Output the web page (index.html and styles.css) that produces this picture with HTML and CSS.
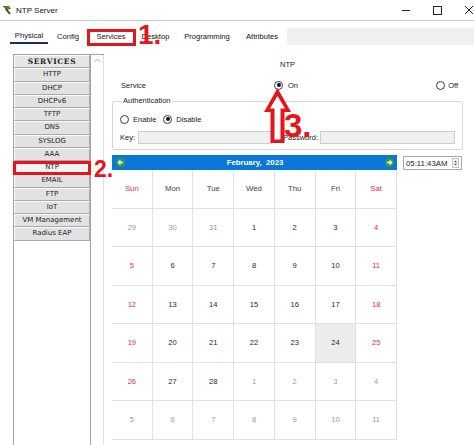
FILE: index.html
```html
<!DOCTYPE html>
<html>
<head>
<meta charset="utf-8">
<title>NTP Server</title>
<link rel="stylesheet" href="styles.css">
</head>
<body>
<div class="window">
  <div class="titlebar">
    <svg class="appicon" viewBox="0 0 10 10" width="10" height="10">
      <path d="M1 1 L7 1 L9 4 L4 5 Z" fill="#3f8a2c"/>
      <path d="M4 4 L8 9" stroke="#5a3a1a" stroke-width="2"/>
      <path d="M1 1 L3 3" stroke="#8a6a3a" stroke-width="1"/>
    </svg>
    <span class="title">NTP Server</span>
    <div class="controls">
      <svg class="ctl-min" width="8" height="8" viewBox="0 0 8 8"><path d="M0 4.5 H8" stroke="#222" stroke-width="1"/></svg>
      <svg class="ctl-max" width="9" height="9" viewBox="0 0 9 9"><rect x="0.5" y="0.5" width="8" height="8" fill="none" stroke="#222" stroke-width="1"/></svg>
      <svg class="ctl-close" width="8" height="8" viewBox="0 0 8 8"><path d="M0 0 L8 8 M8 0 L0 8" stroke="#222" stroke-width="1"/></svg>
    </div>
  </div>

  <div class="tabs">
    <div class="tab tab-physical current">Physical</div>
    <div class="tab tab-config">Config</div>
    <div class="tab tab-services">Services</div>
    <div class="tab tab-desktop">Desktop</div>
    <div class="tab tab-programming">Programming</div>
    <div class="tab tab-attributes active">Attributes</div>
    <div class="tabfill"></div>
  </div>

  <div class="content">
    <div class="sidebar">
      <div class="list">
        <div class="item head">SERVICES</div>
        <div class="item">HTTP</div>
        <div class="item">DHCP</div>
        <div class="item">DHCPv6</div>
        <div class="item">TFTP</div>
        <div class="item">DNS</div>
        <div class="item">SYSLOG</div>
        <div class="item">AAA</div>
        <div class="item selected">NTP</div>
        <div class="item">EMAIL</div>
        <div class="item">FTP</div>
        <div class="item">IoT</div>
        <div class="item">VM Management</div>
        <div class="item">Radius EAP</div>
      </div>
      <div class="scroll">
        <svg class="chev" width="7" height="5" viewBox="0 0 7 5"><path d="M0.5 4 L3.5 1 L6.5 4" fill="none" stroke="#b0b0b0" stroke-width="1"/></svg>
      </div>
    </div>

    <div class="main">
      <div class="ntp-title">NTP</div>
      <div class="service-row">
        <span class="lbl">Service</span>
        <span class="opt opt-on"><span class="radio checked"></span>On</span>
        <span class="spacer"></span>
        <span class="opt opt-off"><span class="radio"></span>Off</span>
      </div>

      <div class="group">
        <span class="legend">Authentication</span>
        <div class="auth-row">
          <span class="opt opt-enable"><span class="radio"></span>Enable</span>
          <span class="opt opt-disable"><span class="radio checked"></span>Disable</span>
        </div>
        <div class="key-row">
          <span class="key-lbl">Key:</span>
          <span class="field field-key"></span>
          <span class="pw-lbl">Password:</span>
          <span class="field field-pw"></span>
        </div>
      </div>

      <div class="cal-row">
        <div class="calendar">
          <div class="cal-head">
            <svg class="nav" width="9" height="9" viewBox="0 0 9 9"><circle cx="4.5" cy="4.5" r="4.5" fill="#2f9e44"/><path d="M7 4.5 H2.4 M4.4 2.5 L2.4 4.5 L4.4 6.5" fill="none" stroke="#fff" stroke-width="1.3"/></svg>
            <span class="cal-title">February,&nbsp; 2023</span>
            <svg class="nav" width="9" height="9" viewBox="0 0 9 9"><circle cx="4.5" cy="4.5" r="4.5" fill="#2f9e44"/><path d="M2 4.5 H6.6 M4.6 2.5 L6.6 4.5 L4.6 6.5" fill="none" stroke="#fff" stroke-width="1.3"/></svg>
          </div>
          <div class="cal-grid">
            <div class="cell wk hd">Sun</div><div class="cell hd">Mon</div><div class="cell hd">Tue</div><div class="cell hd">Wed</div><div class="cell hd">Thu</div><div class="cell hd">Fri</div><div class="cell wk hd">Sat</div>
            <div class="cell other">29</div><div class="cell other">30</div><div class="cell other">31</div><div class="cell">1</div><div class="cell">2</div><div class="cell">3</div><div class="cell wk">4</div>
            <div class="cell wk">5</div><div class="cell">6</div><div class="cell">7</div><div class="cell">8</div><div class="cell">9</div><div class="cell">10</div><div class="cell wk">11</div>
            <div class="cell wk">12</div><div class="cell">13</div><div class="cell">14</div><div class="cell">15</div><div class="cell">16</div><div class="cell">17</div><div class="cell wk">18</div>
            <div class="cell wk">19</div><div class="cell">20</div><div class="cell">21</div><div class="cell">22</div><div class="cell">23</div><div class="cell today">24</div><div class="cell wk">25</div>
            <div class="cell wk">26</div><div class="cell">27</div><div class="cell">28</div><div class="cell other">1</div><div class="cell other">2</div><div class="cell other">3</div><div class="cell other">4</div>
            <div class="cell other">5</div><div class="cell other">6</div><div class="cell other">7</div><div class="cell other">8</div><div class="cell other">9</div><div class="cell other">10</div><div class="cell other">11</div>
          </div>
        </div>
        <div class="time">
          <span class="time-text">05:11:43AM</span>
          <span class="spin">
            <svg width="6" height="10" viewBox="0 0 6 10"><path d="M1 4 L3 2 L5 4 Z M1 6 L3 8 L5 6 Z" fill="#555"/></svg>
          </span>
        </div>
      </div>
    </div>
  </div>

  <div class="mark box1"></div>
  <div class="mark-num num1">1.</div>
  <div class="mark box2"></div>
  <div class="mark-num num2">2.</div>
  <svg class="arrow" width="28" height="57" viewBox="0 0 28 57">
    <path d="M13.5 1 L27 25 L20.5 25 L20.5 56 L6.5 56 L6.5 25 L0 25 Z" fill="#e5151d"/>
    <path d="M13.5 9 L21 21.5 L16.5 21.5 L16.5 52.5 L10.5 52.5 L10.5 21.5 L6 21.5 Z" fill="#fff"/>
  </svg>
  <div class="mark-num num3">3.</div>
</div>
</body>
</html>
```

FILE: styles.css
```css
html, body {
  margin: 0;
  padding: 0;
}
body {
  width: 474px;
  height: 445px;
  overflow: hidden;
  background: #fff;
  font-family: "Liberation Sans", Arial, sans-serif;
  color: #222;
}
.window {
  position: relative;
  width: 474px;
  height: 445px;
  overflow: hidden;
}

/* title bar */
.titlebar {
  height: 20px;
  display: flex;
  align-items: center;
  border-bottom: 1px solid #c9c9c9;
}
.appicon {
  margin-left: 2px;
  margin-right: 4px;
}
.title {
  font-size: 8px;
  color: #111;
}
.controls {
  margin-left: auto;
  display: flex;
  align-items: center;
}
.ctl-min { margin-right: 23px; }
.ctl-max { margin-right: 23px; }
.ctl-close { margin-right: 1px; }

/* tabs */
.tabs {
  height: 24px;
  box-sizing: border-box;
  padding-top: 7px;
  padding-left: 10px;
  display: flex;
}
.tab {
  height: 17px;
  line-height: 17px;
  font-size: 7.6px;
  text-align: center;
  color: #111;
  box-sizing: border-box;
}
.tab.current {
  height: 16px;
  line-height: 15px;
  border-bottom: 2px solid #1d2c5e;
}
.tab-physical { width: 38px; }
.tab-config { width: 40px; }
.tab-services { width: 46px; }
.tab-desktop { width: 43px; }
.tab-programming { width: 60px; }
.tab-attributes { width: 50px; }
.tab.active { background: #fff; }
.tabfill {
  flex: 1;
  height: 17px;
  background: #f0f0f0;
}

/* content */
.content {
  display: flex;
  padding-left: 13px;
}
.sidebar {
  margin-top: 9px;
  width: 91px;
  height: 400px;
  box-sizing: border-box;
  display: flex;
  border-left: 1px solid #a3a3a3;
  border-top: 1px solid #a3a3a3;
}
.list {
  width: 77px;
  box-sizing: border-box;
  border-right: 1px solid #a3a3a3;
}
.item {
  height: 13.25px;
  box-sizing: border-box;
  border: 1px solid;
  border-color: #fbfbfb #a9a9a9 #a9a9a9 #fbfbfb;
  background: #e2e2e2;
  font-family: "DejaVu Sans", Verdana, sans-serif;
  font-size: 7px;
  line-height: 11px;
  text-align: center;
  color: #222;
  white-space: nowrap;
}
.item.head {
  font-family: "DejaVu Serif", "Liberation Serif", serif;
  font-weight: bold;
  font-size: 7.4px;
  letter-spacing: 0.7px;
  background: #e6e6e6;
}
.item.selected {
  background: #f3f3f3;
}
.scroll {
  width: 13px;
  box-sizing: border-box;
  border-right: 1px solid #dedede;
  display: flex;
  justify-content: center;
  padding-top: 3px;
}
.chev { display: block; }

/* main */
.main {
  margin-left: 8px;
  width: 351px;
  font-size: 7.5px;
}
.ntp-title {
  margin-top: 15px;
  height: 10px;
  line-height: 10px;
  text-align: center;
}
.service-row {
  margin-top: 10px;
  height: 10px;
  display: flex;
  align-items: center;
}
.lbl {
  flex: 0 0 162px;
  box-sizing: border-box;
  padding-left: 9px;
}
.opt {
  display: flex;
  align-items: center;
  gap: 4px;
}
.opt-on { gap: 5px; }
.opt-off { gap: 3px; margin-right: 5px; }
.spacer { flex: 1; }
.radio {
  width: 9px;
  height: 9px;
  box-sizing: border-box;
  border: 1px solid #3a3a3a;
  border-radius: 50%;
  background: #fff;
  display: flex;
  align-items: center;
  justify-content: center;
}
.radio.checked::after {
  content: "";
  width: 4px;
  height: 4px;
  border-radius: 50%;
  background: #111;
}

.group {
  margin-top: 11px;
  height: 49px;
  box-sizing: border-box;
  border: 1px solid #d7d7d7;
  border-radius: 2px;
  padding-left: 7px;
}
.legend {
  display: block;
  width: max-content;
  height: 10px;
  line-height: 10px;
  margin-top: -6px;
  margin-left: 2px;
  padding: 0 1px;
  background: #fff;
}
.auth-row {
  margin-top: 8px;
  height: 10px;
  display: flex;
  align-items: center;
}
.opt-enable { margin-right: 7px; }
.key-row {
  margin-top: 7px;
  height: 13px;
  display: flex;
  align-items: center;
}
.key-lbl { width: 18px; }
.field {
  height: 13px;
  box-sizing: border-box;
  border: 1px solid #cdcdcd;
  background: #f0f0f0;
}
.field-key { width: 134px; }
.pw-lbl {
  width: 48px;
  box-sizing: border-box;
  text-align: right;
  padding-right: 2px;
}
.field-pw { width: 135px; }

/* calendar */
.cal-row {
  margin-top: 5px;
  display: flex;
  align-items: flex-start;
}
.calendar { width: 285px; }
.cal-head {
  height: 15px;
  background: #0b77d6;
  display: flex;
  align-items: center;
  padding: 0 3px 0 4px;
}
.nav { display: block; }
.cal-title {
  flex: 1;
  text-align: center;
  color: #fff;
  font-weight: bold;
  font-size: 7.8px;
}
.cal-grid {
  display: grid;
  grid-template-columns: repeat(7, 1fr);
  grid-template-rows: repeat(7, 38.5px);
}
.cell {
  box-sizing: border-box;
  border-right: 1px solid #e1e1e1;
  border-bottom: 1px solid #e1e1e1;
  display: flex;
  align-items: center;
  justify-content: center;
  font-size: 7.6px;
  color: #2a2a2a;
}
.cell.hd { color: #444; font-size: 7.8px; }
.cell.wk { color: #e0323c; }
.cell.other { color: #9a9a9a; }
.cell.today { background: #ececec; }

.time {
  margin-left: 6px;
  margin-top: 1px;
  width: 59px;
  height: 14px;
  box-sizing: border-box;
  border: 1px solid #a9a9a9;
  display: flex;
  align-items: center;
  padding-left: 2px;
  font-size: 7.8px;
  color: #222;
}
.time-text { flex: 1; }
.spin {
  width: 7px;
  height: 10px;
  margin-right: 2px;
  border: 1px solid #c6c6c6;
  box-sizing: border-box;
  display: flex;
  align-items: center;
  justify-content: center;
  background: #f4f4f4;
}
.spin svg { display: block; width: 5px; height: 8px; }

/* annotations overlaying the screenshot */
.mark {
  position: absolute;
  box-sizing: border-box;
  border: 3px solid #e5151d;
}
.box1 { left: 87px; top: 29px; width: 49px; height: 17px; }
.box2 { left: 13px; top: 161px; width: 78px; height: 14px; }
.mark-num {
  position: absolute;
  color: #e5151d;
  font-family: "Liberation Sans", Arial, sans-serif;
  font-weight: bold;
  line-height: 1;
}
.num1 { left: 138px; top: 21px; font-size: 28px; }
.num2 { left: 94px; top: 158px; font-size: 23px; }
.num3 { left: 284px; top: 109px; font-size: 33px; }
.arrow {
  position: absolute;
  left: 264px;
  top: 87px;
}
```
